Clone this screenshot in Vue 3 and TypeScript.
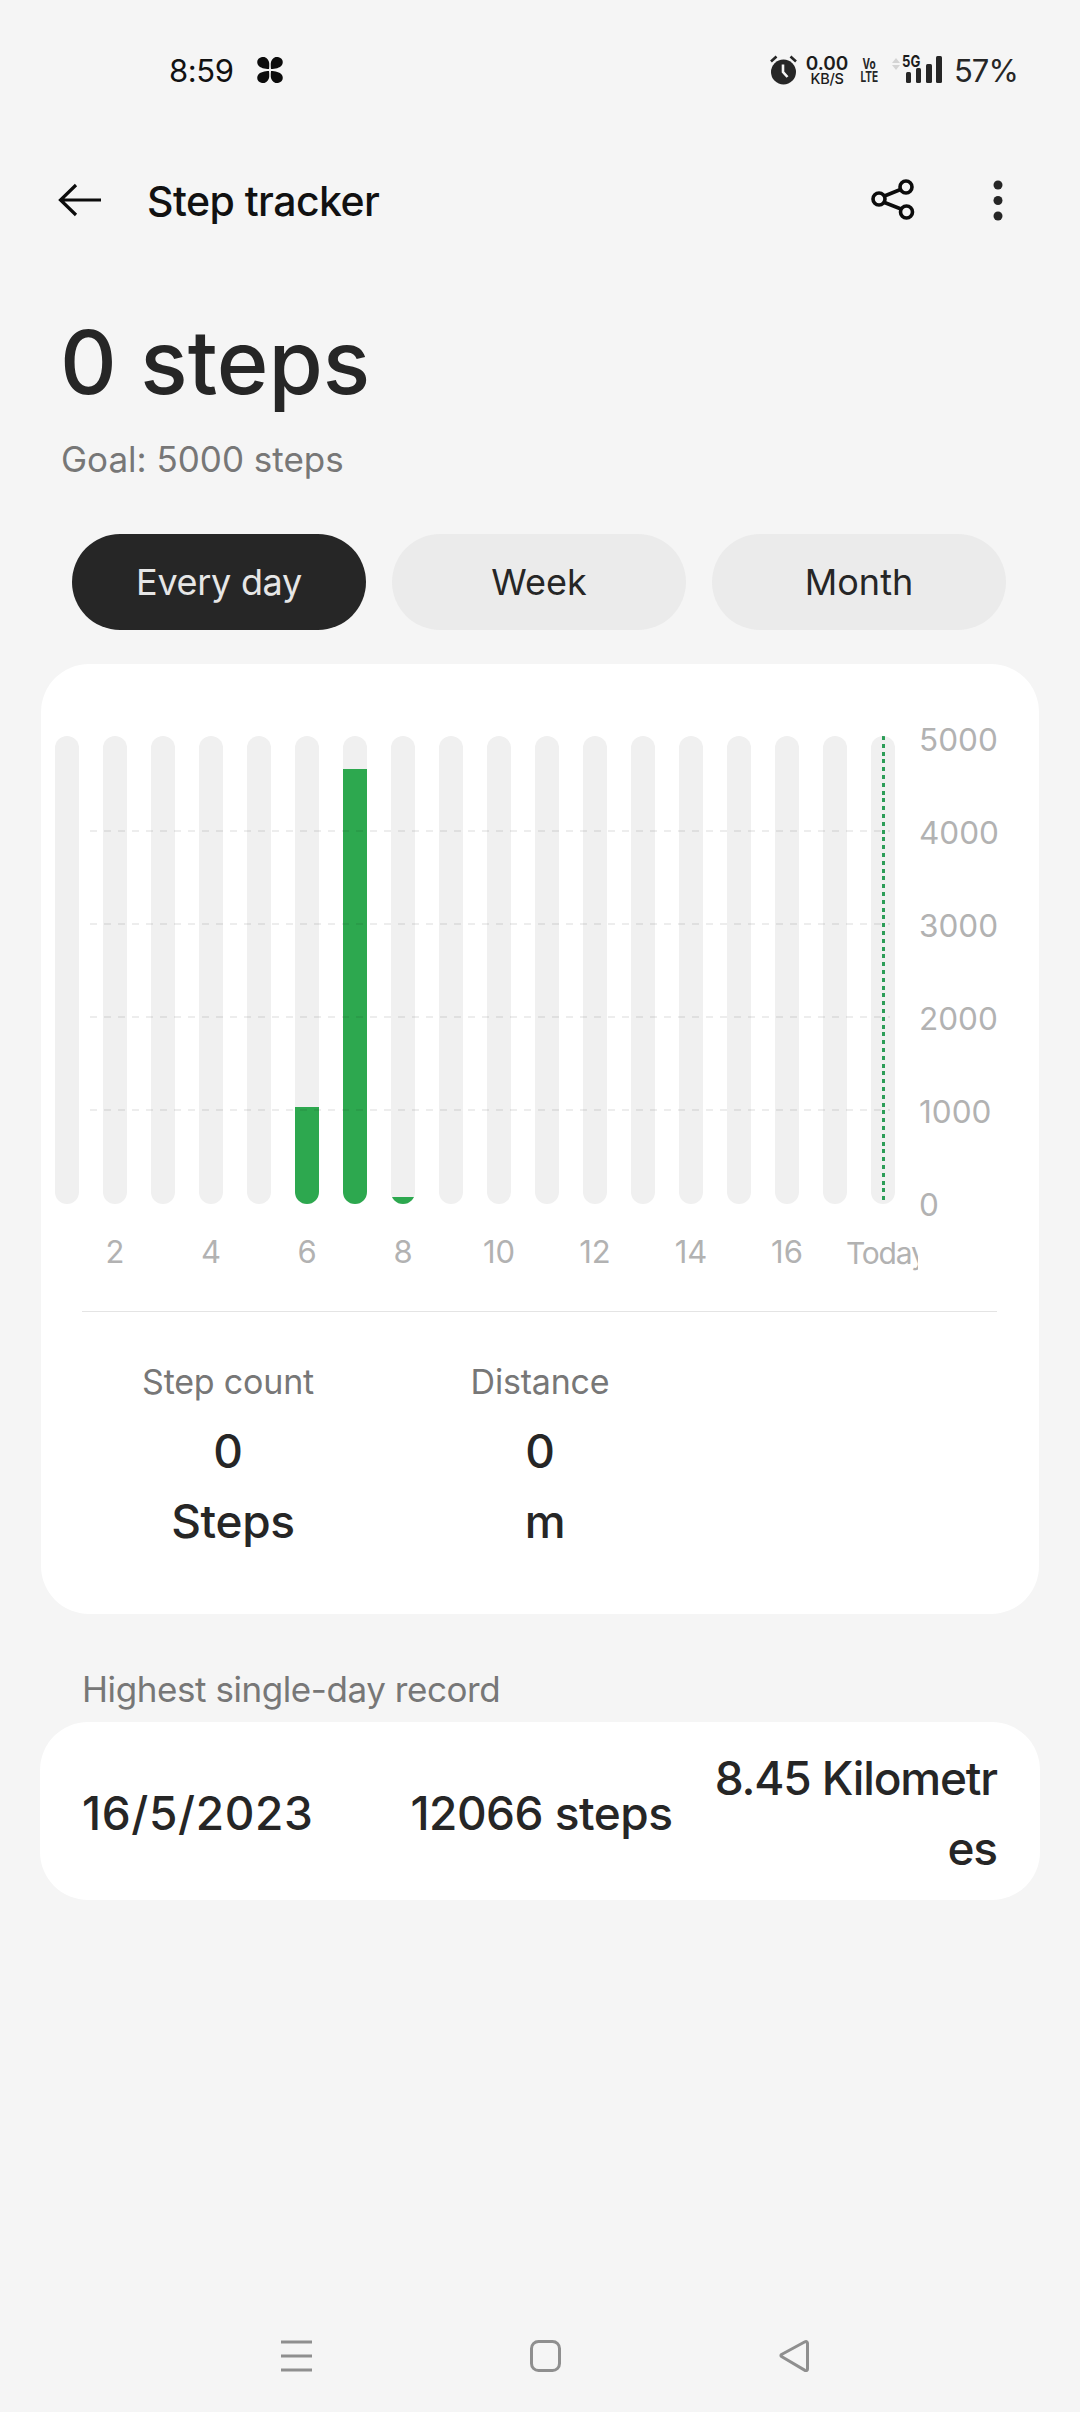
<script setup lang="ts">
interface Bar { id: number; steps: number; today: boolean }
const goal = 5000
const stepsByDay: Record<number, number> = { 6: 1036, 7: 4647, 8: 80 }
const bars: Bar[] = Array.from({ length: 18 }, (_, i) => ({
  id: i + 1,
  steps: stepsByDay[i + 1] ?? 0,
  today: i === 17,
}))
const gridTops = [94, 187, 280, 373]
const yLabels = ['5000', '4000', '3000', '2000', '1000', '0']
const xCells = bars.map((b) => (b.id === 18 ? '' : b.id % 2 === 0 ? String(b.id) : ''))
const tabs = ['Every day', 'Week', 'Month']
</script>

<template>
  <div class="page">
    <div class="status">
      <span class="time">8:59</span>
      <svg class="clover" width="28" height="26" viewBox="0 0 28 26">
        <path d="M13 12C9 12 4 11 2 8 0 4 2 1 6 0c4-1 7 3 7.200 6 .1 2 .1 4-.2 6ZM15 12c4 0 9-1 11-4 2-4 0-7-4-8-4-1-7 3-7.200 6-.1 2-.1 4 .2 6ZM13 14c-4 0-9 1-11 4-2 4 0 7 4 8 4 1 7-3 7.200-6 .1-2 .1-4-.2-6ZM15 14c4 0 9 1 11 4 2 4 0 7-4 8-4 1-7-3-7.200-6-.1-2-.1-4 .2-6Z" fill="#0c0c0c" />
      </svg>
      <span class="spacer"></span>
      <svg class="alarm" width="27" height="30" viewBox="0 0 27 30">
        <circle cx="13.500" cy="17" r="12.500" fill="#262626" />
        <path d="M13 9.500V17l4.500 5" fill="none" stroke="#f5f5f5" stroke-width="2.600" />
        <path d="M1 6.500 6.500 1.500M26 6.500 20.500 1.500" stroke="#262626" stroke-width="2.600" />
      </svg>
      <div class="speed">
        <span class="speed-num">0.00</span>
        <span class="speed-unit">KB/S</span>
      </div>
      <div class="volte"><span>Vo</span><span>LTE</span></div>
      <div class="signal">
        <span class="fiveg">5G</span>
        <svg width="50" height="30" viewBox="0 0 50 30">
          <path d="M4 3 8 8H0ZM0 10h8L4 15Z" fill="#d4d4d4" />
          <rect x="14" y="17" width="5" height="11" rx="1.500" fill="#262626" />
          <rect x="24" y="13" width="5" height="15" rx="1.500" fill="#262626" />
          <rect x="34" y="9" width="6" height="19" rx="1.500" fill="#262626" />
          <rect x="44" y="1" width="6" height="27" rx="1.500" fill="#262626" />
        </svg>
      </div>
      <span class="battery">57%</span>
    </div>

    <header class="header">
      <svg class="back" width="44" height="34" viewBox="0 0 44 34">
        <path d="M43 17H3M18 2 2.500 17 18 32" fill="none" stroke="#0c0c0c" stroke-width="3.200" />
      </svg>
      <h1 class="title">Step tracker</h1>
      <span class="spacer"></span>
      <svg class="share" width="44" height="42" viewBox="0 0 44 42">
        <g fill="none" stroke="#0c0c0c" stroke-width="3.600">
          <circle cx="8" cy="21" r="6" />
          <circle cx="35" cy="9" r="6" />
          <circle cx="35.500" cy="34" r="6" />
          <path d="M13.500 18 29.500 11.500M13.500 24.500 30 31" />
        </g>
      </svg>
      <svg class="kebab" width="10" height="42" viewBox="0 0 10 42">
        <circle cx="5" cy="5" r="4.500" fill="#262626" />
        <circle cx="5" cy="20.500" r="4.500" fill="#262626" />
        <circle cx="5" cy="36" r="4.500" fill="#262626" />
      </svg>
    </header>

    <section class="summary">
      <div class="big">0 steps</div>
      <div class="goal">Goal: 5000 steps</div>
    </section>

    <nav class="tabs">
      <div v-for="(t, i) in tabs" :key="t" class="tab" :class="{ active: i === 0 }">{{ t }}</div>
    </nav>

    <section class="card chart-card">
      <div class="chart">
        <div class="bars">
          <div v-for="b in bars" :key="b.id" class="track">
            <div class="fill" :style="{ height: (b.steps / goal) * 100 + '%' }"></div>
            <div v-if="b.today" class="dots"></div>
          </div>
          <div v-for="t in gridTops" :key="t" class="gridline" :style="{ top: t + 'px' }"></div>
        </div>
        <div class="yaxis">
          <span v-for="l in yLabels" :key="l">{{ l }}</span>
        </div>
      </div>
      <div class="xaxis">
        <span v-for="(c, i) in xCells" :key="i" class="xcell">{{ c }}</span>
      </div>
      <div class="today">Today</div>
      <div class="divider"></div>
      <div class="stats">
        <div class="stat">
          <div class="stat-label">Step count</div>
          <div class="stat-value">0</div>
          <div class="stat-unit">Steps</div>
        </div>
        <div class="stat">
          <div class="stat-label">Distance</div>
          <div class="stat-value">0</div>
          <div class="stat-unit">m</div>
        </div>
      </div>
    </section>

    <div class="record-title">Highest single-day record</div>
    <section class="card record">
      <div class="rec-date">16/5/2023</div>
      <div class="rec-steps">12066 steps</div>
      <div class="rec-km">8.45 Kilometr<br />es</div>
    </section>

    <footer class="navbar">
      <svg width="32" height="32" viewBox="0 0 32 32">
        <path d="M0 2h31M0 16h31M0 30h31" stroke="#8f8f8f" stroke-width="3" />
      </svg>
      <svg width="32" height="32" viewBox="0 0 32 32">
        <rect x="1.500" y="1.500" width="28" height="29" rx="7" fill="none" stroke="#8f8f8f" stroke-width="3" />
      </svg>
      <svg width="32" height="32" viewBox="0 0 32 32">
        <path d="M2.500 16.500c-.8-.6-.8-1.400 0-2L26 1.800c1.400-.7 2.500-.1 2.500 1.500v25.600c0 1.600-1.100 2.200-2.500 1.500Z" fill="none" stroke="#8f8f8f" stroke-width="3" stroke-linejoin="round" />
      </svg>
    </footer>
  </div>
</template>

<style>
html, body { margin: 0; background: #f5f5f5; }
</style>

<style scoped>
.page {
  width: 1080px;
  height: 2412px;
  background: #f5f5f5;
  display: flex;
  flex-direction: column;
  font-family: Inter, "Noto Sans", sans-serif;
  color: #262626;
  overflow: hidden;
}
.spacer { flex: 1; }
.status {
  margin-top: 50px;
  height: 40px;
  padding: 0 64px 0 169px;
  display: flex;
  align-items: center;
  flex-shrink: 0;
}
.time { font-size: 31px; letter-spacing: -.4px; color: #111; width: 87px; }
.clover { flex-shrink: 0; }
.alarm { margin-right: 9px; }
.speed { width: 42px; display: flex; flex-direction: column; align-items: center; margin-right: 12px; }
.speed-num { font-size: 19px; line-height: 17px; font-weight: 600; color: #1c1c1c; }
.speed-unit { font-size: 14.500px; line-height: 13px; font-weight: 500; letter-spacing: -.3px; color: #1c1c1c; }
.volte { width: 18px; display: flex; flex-direction: column; align-items: center; margin-right: 14px; font-size: 14px; line-height: 13px; font-weight: 700; color: #262626; }
.volte span { transform: scaleX(.72); white-space: nowrap; }
.signal { position: relative; width: 50px; height: 30px; margin-right: 12px; }
.signal svg { display: block; }
.fiveg { position: absolute; left: 10px; top: -2px; font-size: 16px; line-height: 17px; font-weight: 700; transform: scaleX(.82); transform-origin: left; color: #1c1c1c; }
.battery { font-size: 31px; color: #262626; width: 62px; white-space: nowrap; letter-spacing: -1px; }

.header {
  margin-top: 70px;
  height: 80px;
  padding: 0 77px 0 58px;
  display: flex;
  align-items: center;
  flex-shrink: 0;
}
.back { flex-shrink: 0; }
.title { margin: 2px 0 0 45px; font-size: 41px; font-weight: 500; color: #111; line-height: 60px; letter-spacing: -.55px; }
.share { margin-right: 78px; margin-top: -2px; }
.kebab { margin-top: 2px; }

.summary { margin-top: 67px; padding-left: 62px; }
.big { font-size: 88px; line-height: 110px; font-weight: 500; letter-spacing: 0; margin-left: -2px; }
.goal { font-size: 35px; line-height: 44px; margin-top: 20px; margin-left: -1px; color: #777; }

.tabs { margin-top: 53px; padding-left: 72px; display: flex; gap: 26px; }
.tab {
  width: 294px;
  height: 96px;
  border-radius: 48px;
  background: #ebebeb;
  display: flex;
  align-items: center;
  justify-content: center;
  font-size: 36px;
  color: #262626;
}
.tab.active { background: #262626; color: #e6e6e6; letter-spacing: -.3px; }

.card { background: #fff; margin-left: 41px; width: 998px; border-radius: 48px; }
.chart-card { margin-top: 34px; height: 950px; padding-top: 72px; box-sizing: border-box; position: relative; }
.chart { display: flex; align-items: flex-start; margin-left: 14px; height: 468px; }
.bars { position: relative; display: flex; gap: 24px; height: 468px; width: 840px; flex-shrink: 0; }
.track {
  position: relative;
  width: 24px;
  height: 100%;
  background: #f0f0f0;
  border-radius: 12px;
  overflow: hidden;
  display: flex;
  flex-direction: column;
  justify-content: flex-end;
}
.fill { background: #2da84f; width: 100%; }
.dots {
  position: absolute;
  top: 0;
  bottom: 0;
  left: 10.500px;
  width: 3.500px;
  background: repeating-linear-gradient(to bottom, #2c9d57 0 4px, transparent 4px 7.800px);
}
.gridline {
  position: absolute;
  left: 35px;
  width: 800px;
  height: 2px;
  background: repeating-linear-gradient(to right, rgba(0, 0, 0, .07) 0 7px, transparent 7px 14px);
}
.yaxis {
  margin: -16px 0 0 24px;
  height: 505px;
  flex-shrink: 0;
  display: flex;
  flex-direction: column;
  justify-content: space-between;
  font-size: 31.500px;
  line-height: 40px;
  color: #b2b2b2;
}
.xaxis {
  margin: 28px 0 0 2px;
  display: grid;
  grid-template-columns: repeat(18, 48px);
  height: 40px;
  font-size: 31px;
  line-height: 40px;
  color: #b2b2b2;
  text-align: center;
}
.today {
  position: absolute;
  left: 805px;
  top: 569px;
  width: 72px;
  height: 44px;
  overflow: hidden;
  white-space: nowrap;
  font-size: 30px;
  line-height: 40px;
  letter-spacing: -1.200px;
  color: #b2b2b2;
}
.divider { margin: 39px 42px 0 41px; height: 1px; background: #e4e4e4; }
.stats { display: grid; grid-template-columns: 312px 312px; margin: 48px 0 0 31px; text-align: center; }
.stat-label { font-size: 34px; line-height: 44px; color: #777; letter-spacing: -.2px; }
.stat-value { font-size: 46px; line-height: 70px; margin-top: 12px; font-weight: 500; }
.stat-unit { font-size: 46px; line-height: 70px; font-weight: 500; padding-left: 10px; letter-spacing: -.3px; }

.record-title { margin: 53px 0 0 82px; font-size: 35px; line-height: 44px; color: #777; flex-shrink: 0; letter-spacing: -.43px; }
.record {
  margin-top: 11px;
  margin-left: 40px;
  width: 1000px;
  height: 178px;
  padding: 4px 43px 0 42px;
  box-sizing: border-box;
  display: grid;
  grid-template-columns: 305px 305px 305px;
  align-items: center;
  font-size: 46px;
  line-height: 70px;
  font-weight: 500;
}
.rec-date { letter-spacing: .65px; }
.rec-steps { text-align: center; padding-left: 4px; white-space: nowrap; letter-spacing: -.5px; }
.rec-km { text-align: right; white-space: nowrap; letter-spacing: -1.150px; }

.navbar {
  margin-top: auto;
  padding: 0 0 40px 281px;
  display: flex;
  gap: 217px;
}
.navbar svg { display: block; }
</style>
